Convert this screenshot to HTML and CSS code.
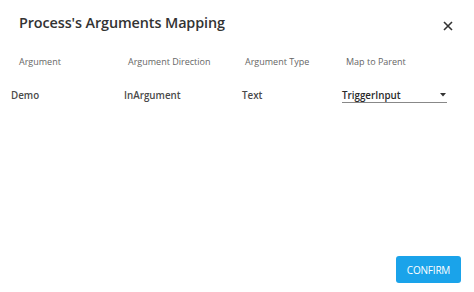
FILE: index.html
```html
<!DOCTYPE html>
<html>
<head>
<meta charset="utf-8">
<link rel="stylesheet" href="styles.css">
</head>
<body>
<div class="dialog">
  <div class="header">
    <h1 class="title">Process's Arguments Mapping</h1>
    <button class="close" aria-label="close">
      <svg width="10" height="10" viewBox="0 0 10 10"><path d="M1 1L9 9M9 1L1 9" stroke="#333" stroke-width="1.6" fill="none"/></svg>
    </button>
  </div>
  <div class="grid head">
    <div class="c1">Argument</div>
    <div class="c2">Argument Direction</div>
    <div class="c3">Argument Type</div>
    <div class="c4">Map to Parent</div>
  </div>
  <div class="grid row">
    <div>Demo</div>
    <div>InArgument</div>
    <div>Text</div>
    <div class="select"><span>TriggerInput</span><svg width="6" height="4" viewBox="0 0 6 4"><path d="M0 0H6L3 3.5Z" fill="#333"/></svg></div>
  </div>
  <div class="spacer"></div>
  <div class="actions">
    <button class="confirm">CONFIRM</button>
  </div>
</div>
</body>
</html>
```

FILE: styles.css
```css
* { box-sizing: border-box; }
body { margin: 0; background: #fff; font-family: "Open Sans", "Noto Sans", sans-serif; }
.dialog { width: 474px; height: 292px; display: flex; flex-direction: column; }
.header { display: flex; align-items: center; justify-content: space-between; padding: 13px 21px 0 19px; height: 33px; }
.title { margin: 0; font-size: 14.4px; font-weight: 600; color: #333; line-height: 20px; letter-spacing: -0.1px; }
.close { border: 0; background: none; padding: 0; width: 10px; height: 10px; display: flex; margin-top: 6px; }
.grid { display: grid; grid-template-columns: 113px 118px 100px 105px; padding-left: 11px; }
.head { margin-top: 22px; font-size: 9px; line-height: 14px; color: #666; }
.head .c1 { padding-left: 8px; }
.head .c2 { padding-left: 4px; }
.head .c3 { padding-left: 3px; }
.head .c4 { padding-left: 4px; }
.row { margin-top: 19px; font-size: 9.8px; line-height: 15px; color: #4a4a4a; font-weight: 600; }
.select { display: flex; justify-content: space-between; align-items: center; border-bottom: 1px solid #888; padding-right: 1px; height: 15px; }
.select span { color: #2a2a2a; }
.spacer { flex: 1; }
.actions { display: flex; justify-content: flex-end; padding: 0 13px 9px 0; }
.confirm { width: 65px; height: 27px; border: 0; border-radius: 3px; background: #1aa3ea; color: #fff; font-family: "Open Sans", sans-serif; font-size: 10px; padding: 0; letter-spacing: -0.2px; }
```
